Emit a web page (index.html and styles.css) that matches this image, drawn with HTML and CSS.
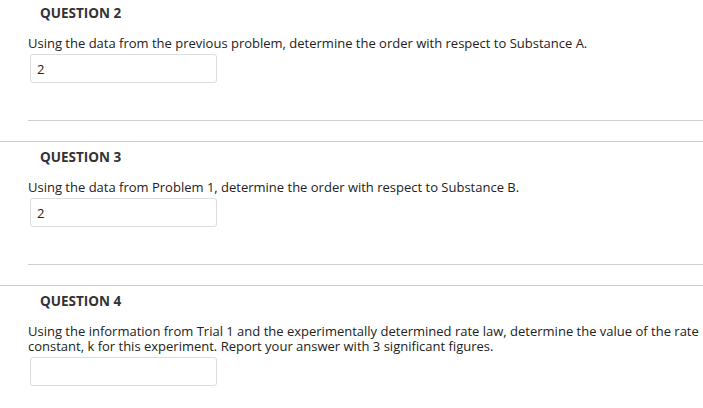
FILE: index.html
```html
<!DOCTYPE html>
<html lang="en">
<head>
	<meta charset="UTF-8">
	<title>Questions</title>
	<link rel="stylesheet" href="styles.css">
</head>
<body>
	<ul class="questions">
		<li class="question">
			<h3 class="q-title">QUESTION 2</h3>
			<div class="q-body">
				<p class="q-text">Using the data from the previous problem, determine the order with respect to Substance A.</p>
				<input class="answer" type="text" value="2">
			</div>
		</li>
		<li class="question">
			<h3 class="q-title">QUESTION 3</h3>
			<div class="q-body">
				<p class="q-text">Using the data from Problem 1, determine the order with respect to Substance B.</p>
				<input class="answer" type="text" value="2">
			</div>
		</li>
		<li class="question">
			<h3 class="q-title">QUESTION 4</h3>
			<div class="q-body">
				<p class="q-text">Using the information from Trial 1 and the experimentally determined rate law, determine the value of the rate constant, k for this experiment. Report your answer with 3 significant figures.</p>
				<input class="answer" type="text" value="">
			</div>
		</li>
	</ul>
</body>
</html>
```

FILE: styles.css
```css
body{
	margin: 0;
	background: #fff;
	color: #222;
	font-family: "Open Sans", "Liberation Sans", sans-serif;
}
.questions{
	list-style: none;
	margin: 0;
	padding: 0;
}
	.question{
		border-top: 1px solid #cfcfcf;
		padding-top: 6px;
		margin-bottom: 20px;
	}
	.question:first-child{
		border-top: 0;
		padding-top: 4px;
	}
		.q-title{
			margin: 0;
			padding-left: 40px;
			font-size: 13.5px;
			line-height: 18px;
			font-weight: bold;
			color: #333;
		}
		.q-body{
			margin-left: 28px;
			padding-bottom: 37px;
			border-bottom: 1px solid #cfcfcf;
		}
			.q-text{
				margin: 14px 0 0;
				font-size: 13px;
				line-height: 15px;
				color: #222;
			}
			.answer{
				display: block;
				box-sizing: border-box;
				width: 187px;
				height: 29px;
				margin: 3px 0 0 2px;
				padding: 0 6px;
				border: 1px solid #dcdcdc;
				border-radius: 3px;
				font: 13px "Open Sans", "Liberation Sans", sans-serif;
				color: #222;
				background: #fff;
				outline: none;
			}
```
